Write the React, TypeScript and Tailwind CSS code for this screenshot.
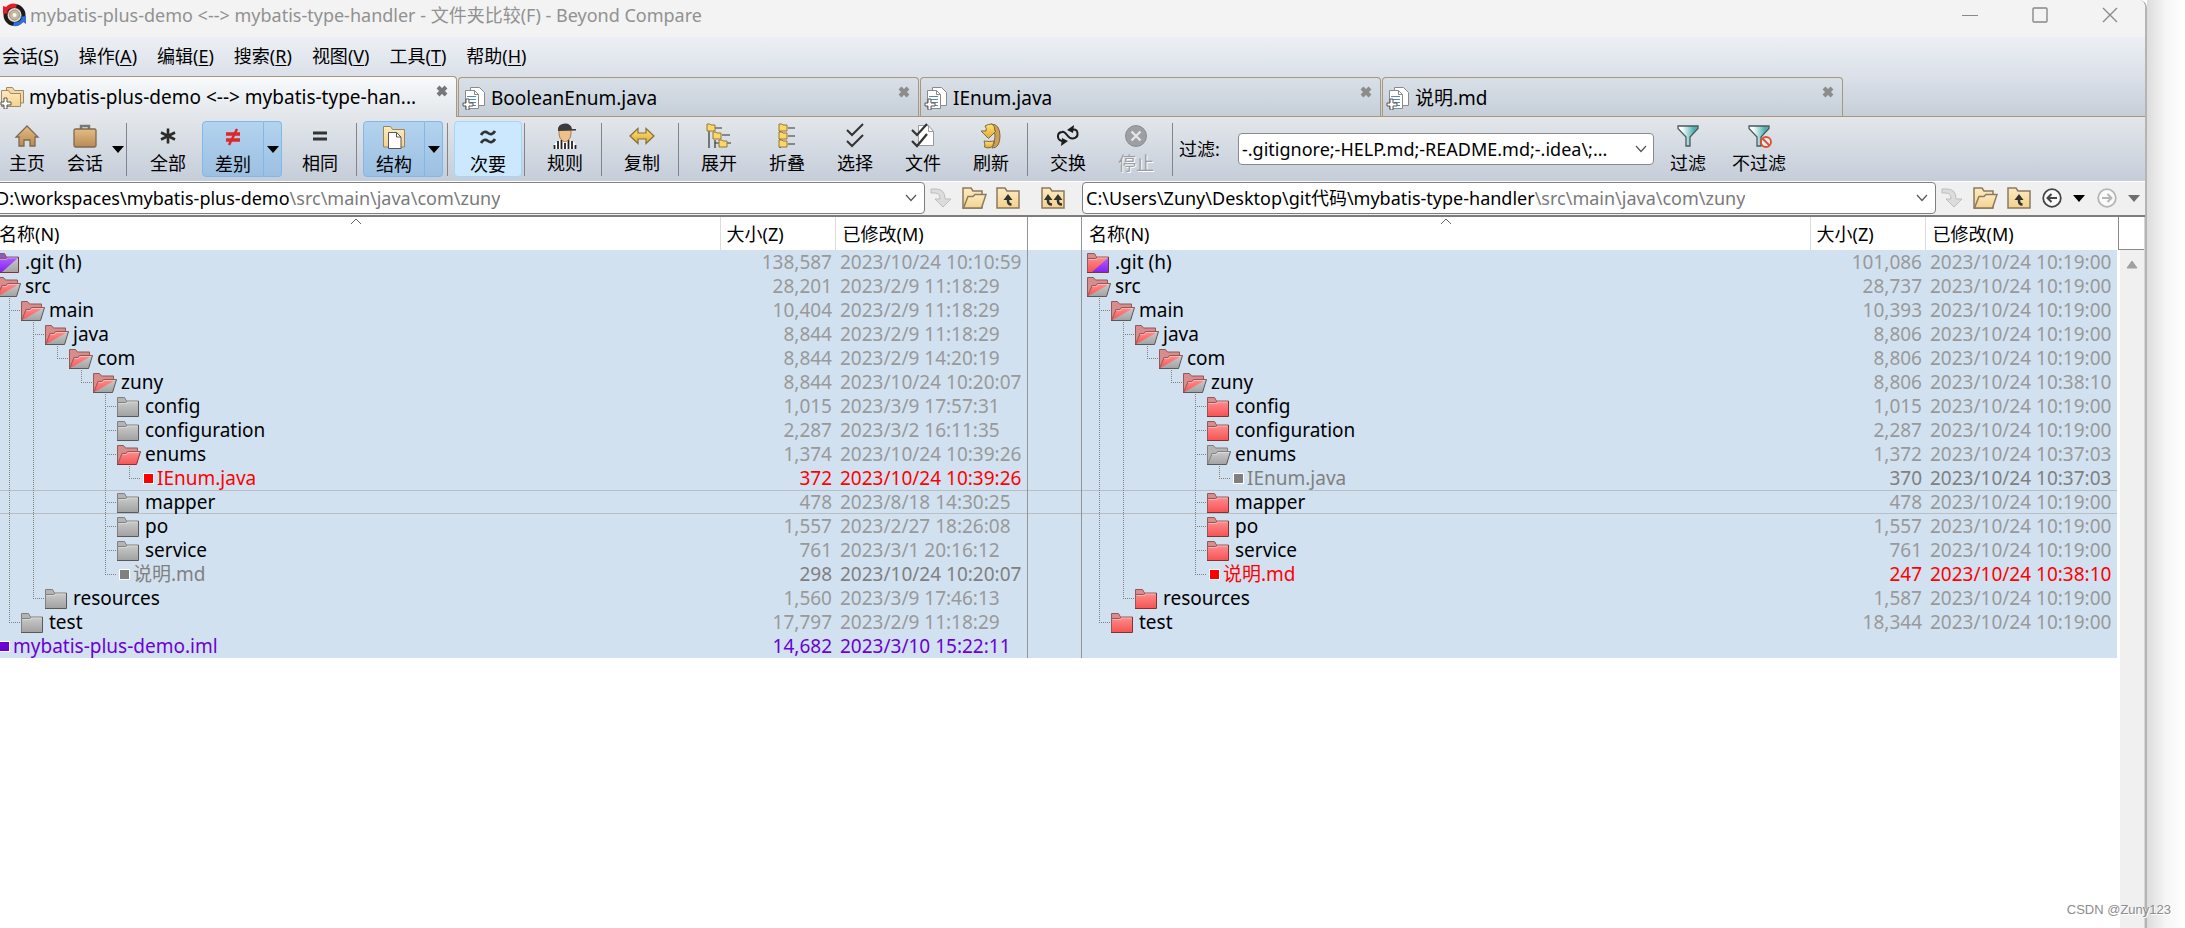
import { useState } from 'react';
import type { ReactNode } from 'react';

type Tone = 'red' | 'gray' | 'purple';
type Guide = 'pass' | 'tee' | 'corner' | 'none';

interface Entry {
  name: string;
  kind: 'closed' | 'open' | 'file';
  fill: [Tone, Tone];
  size: string;
  modified: string;
}

interface Row {
  guides: Guide[];
  left?: Entry;
  right?: Entry;
}

const folder = (name: string, kind: 'closed' | 'open', fill: [Tone, Tone], size: string, modified: string): Entry => ({
  name, kind, fill, size, modified,
});

const file = (name: string, tone: Tone, size: string, modified: string): Entry => ({
  name, kind: 'file', fill: [tone, tone], size, modified,
});

const GRAY: [Tone, Tone] = ['gray', 'gray'];
const RED: [Tone, Tone] = ['red', 'red'];
const MIXED: [Tone, Tone] = ['red', 'gray'];

const rows: Row[] = [
  {
    guides: [],
    left: folder('.git (h)', 'closed', ['purple', 'gray'], '138,587', '2023/10/24 10:10:59'),
    right: folder('.git (h)', 'closed', ['red', 'purple'], '101,086', '2023/10/24 10:19:00'),
  },
  {
    guides: [],
    left: folder('src', 'open', MIXED, '28,201', '2023/2/9 11:18:29'),
    right: folder('src', 'open', MIXED, '28,737', '2023/10/24 10:19:00'),
  },
  {
    guides: ['tee'],
    left: folder('main', 'open', MIXED, '10,404', '2023/2/9 11:18:29'),
    right: folder('main', 'open', MIXED, '10,393', '2023/10/24 10:19:00'),
  },
  {
    guides: ['pass', 'tee'],
    left: folder('java', 'open', MIXED, '8,844', '2023/2/9 11:18:29'),
    right: folder('java', 'open', MIXED, '8,806', '2023/10/24 10:19:00'),
  },
  {
    guides: ['pass', 'pass', 'corner'],
    left: folder('com', 'open', MIXED, '8,844', '2023/2/9 14:20:19'),
    right: folder('com', 'open', MIXED, '8,806', '2023/10/24 10:19:00'),
  },
  {
    guides: ['pass', 'pass', 'none', 'corner'],
    left: folder('zuny', 'open', MIXED, '8,844', '2023/10/24 10:20:07'),
    right: folder('zuny', 'open', MIXED, '8,806', '2023/10/24 10:38:10'),
  },
  {
    guides: ['pass', 'pass', 'none', 'none', 'tee'],
    left: folder('config', 'closed', GRAY, '1,015', '2023/3/9 17:57:31'),
    right: folder('config', 'closed', RED, '1,015', '2023/10/24 10:19:00'),
  },
  {
    guides: ['pass', 'pass', 'none', 'none', 'tee'],
    left: folder('configuration', 'closed', GRAY, '2,287', '2023/3/2 16:11:35'),
    right: folder('configuration', 'closed', RED, '2,287', '2023/10/24 10:19:00'),
  },
  {
    guides: ['pass', 'pass', 'none', 'none', 'tee'],
    left: folder('enums', 'open', RED, '1,374', '2023/10/24 10:39:26'),
    right: folder('enums', 'open', GRAY, '1,372', '2023/10/24 10:37:03'),
  },
  {
    guides: ['pass', 'pass', 'none', 'none', 'pass', 'corner'],
    left: file('IEnum.java', 'red', '372', '2023/10/24 10:39:26'),
    right: file('IEnum.java', 'gray', '370', '2023/10/24 10:37:03'),
  },
  {
    guides: ['pass', 'pass', 'none', 'none', 'tee'],
    left: folder('mapper', 'closed', GRAY, '478', '2023/8/18 14:30:25'),
    right: folder('mapper', 'closed', RED, '478', '2023/10/24 10:19:00'),
  },
  {
    guides: ['pass', 'pass', 'none', 'none', 'tee'],
    left: folder('po', 'closed', GRAY, '1,557', '2023/2/27 18:26:08'),
    right: folder('po', 'closed', RED, '1,557', '2023/10/24 10:19:00'),
  },
  {
    guides: ['pass', 'pass', 'none', 'none', 'tee'],
    left: folder('service', 'closed', GRAY, '761', '2023/3/1 20:16:12'),
    right: folder('service', 'closed', RED, '761', '2023/10/24 10:19:00'),
  },
  {
    guides: ['pass', 'pass', 'none', 'none', 'corner'],
    left: file('说明.md', 'gray', '298', '2023/10/24 10:20:07'),
    right: file('说明.md', 'red', '247', '2023/10/24 10:38:10'),
  },
  {
    guides: ['pass', 'corner'],
    left: folder('resources', 'closed', GRAY, '1,560', '2023/3/9 17:46:13'),
    right: folder('resources', 'closed', RED, '1,587', '2023/10/24 10:19:00'),
  },
  {
    guides: ['corner'],
    left: folder('test', 'closed', GRAY, '17,797', '2023/2/9 11:18:29'),
    right: folder('test', 'closed', RED, '18,344', '2023/10/24 10:19:00'),
  },
  {
    guides: [],
    left: file('mybatis-plus-demo.iml', 'purple', '14,682', '2023/3/10 15:22:11'),
  },
];

const menus = [
  ['会话', 'S'],
  ['操作', 'A'],
  ['编辑', 'E'],
  ['搜索', 'R'],
  ['视图', 'V'],
  ['工具', 'T'],
  ['帮助', 'H'],
];

const tabs = ['BooleanEnum.java', 'IEnum.java', '说明.md'];

const fileTone: Record<Tone, string> = {
  red: 'text-[#ff0000]',
  gray: 'text-[#808080]',
  purple: 'text-[#6a00d5]',
};

const bulletTone: Record<Tone, string> = {
  red: 'bg-[#ff0000]',
  gray: 'bg-[#808080]',
  purple: 'bg-[#6a00d5]',
};

const backFill: Record<Tone, string> = { red: '#d98c8c', gray: '#b4b4b4', purple: '#8a5cc0' };

/* Shared gradients */
function Defs() {
  const stops: [string, string, string][] = [
    ['red', '#ff8e8e', '#f65454'],
    ['gray', '#cbcbcb', '#a2a2a2'],
    ['purple', '#ae63ff', '#8420f0'],
    ['sand', '#fdeac0', '#f3d28c'],
    ['brown', '#e4bd80', '#b98a57'],
    ['gold', '#ffe27a', '#e0a92c'],
  ];
  return (
    <svg className="absolute size-0" aria-hidden="true">
      <defs>
        {stops.map(([id, from, to]) => (
          <linearGradient key={id} id={id} x1="0" y1="0" x2="0" y2="1">
            <stop offset="0" stopColor={from} />
            <stop offset="1" stopColor={to} />
          </linearGradient>
        ))}
        <linearGradient id="teal" x1="0" y1="0" x2="1" y2="0">
          <stop offset="0.2" stopColor="#ffffff" />
          <stop offset="0.8" stopColor="#4fb0ae" />
        </linearGradient>
      </defs>
    </svg>
  );
}

function Svg({ w, h, children }: { w: number; h: number; children: ReactNode }) {
  return (
    <svg width={w} height={h} viewBox={`0 0 ${w} ${h}`} fill="none" className="shrink-0" aria-hidden="true">
      {children}
    </svg>
  );
}

function TreeFolder({ kind, fill }: { kind: 'closed' | 'open'; fill: [Tone, Tone] }) {
  const [a, b] = fill;
  const edge = a === 'gray' ? '#808080' : '#8f5a5a';
  if (kind === 'closed') {
    return (
      <Svg w={24} h={20}>
        <path d="M0.5 5V0.5h7l2 3.5v2h-9z" fill={backFill[a]} stroke={edge} />
        <path d="M0.5 5.5h8l2-1.500h11v15h-21z" fill={`url(#${a})`} />
        {a !== b && <path d="M21.500 4.500v15h-17z" fill={`url(#${b})`} />}
        <path d="M0.5 19V5.500h8l2-1.500h11" stroke={edge} />
        <path d="M1.500 6.500h8l1.500-1.500h9.500" stroke="#fff" strokeOpacity="0.35" />
        <path d="M21.500 4v15.500H0" stroke={a === 'gray' ? '#5a5a5a' : '#7a3535'} />
      </Svg>
    );
  }
  return (
    <Svg w={24} h={20}>
      <path d="M0.500 19V0.500h6l2 2.500h12v14z" fill={backFill[a]} stroke={edge} />
      <path d="M0.500 19.500L5 8.500h4l1.500-2h13l-4 13z" fill={`url(#${a})`} />
      {a !== b && <path d="M23.500 6.500l-4 13h-19z" fill={`url(#${b})`} />}
      <path d="M0.500 19.500L5 8.500h4l1.500-2h13" stroke={edge} />
      <path d="M5.500 9.500h4l1.500-2h11" stroke="#fff" strokeOpacity="0.4" />
      <path d="M23.500 6.500l-4 13h-19.500" stroke={b === 'gray' ? '#5a5a5a' : '#8a3030'} />
    </Svg>
  );
}

function GuideCell({ type }: { type: Guide }) {
  return (
    <Svg w={24} h={24}>
      {type !== 'none' && (
        <path d={type === 'corner' ? 'M12.500 0v13' : 'M12.500 0v24'} stroke="#808080" strokeDasharray="1 1" />
      )}
      {(type === 'tee' || type === 'corner') && (
        <path d="M12 12.500h12" stroke="#808080" strokeDasharray="1 1" />
      )}
    </Svg>
  );
}

function SandFolder({ children }: { children?: ReactNode }) {
  return (
    <Svg w={24} h={22}>
      <path d="M1 21V1h8l2 3h12v17z" fill="url(#sand)" stroke="#8a7a60" strokeWidth="1.500" />
      {children}
    </Svg>
  );
}

function UpFolderIcon() {
  return (
    <SandFolder>
      <path d="M12 9v5q0 3.500 3.500 3.500" stroke="#333" strokeWidth="2.500" />
      <path d="M7.500 13l4.500-6 4.500 6z" fill="#333" />
    </SandFolder>
  );
}

function UpUpFolderIcon() {
  return (
    <SandFolder>
      <path d="M7 10v4q0 3.500 4 3.500M17 10v4q0 3.500 4 3.500" stroke="#333" strokeWidth="2.500" />
      <path d="M3 13l4-6 4.500 6zM12.500 13l4.500-6 4.500 6z" fill="#333" />
    </SandFolder>
  );
}

function OpenFolderIcon() {
  return (
    <Svg w={25} h={22}>
      <path d="M1 21V1h8l2 3h9v17z" fill="url(#sand)" stroke="#8a7a60" strokeWidth="1.500" />
      <path d="M1.500 21L6 9.500h5l2-2h11L19.500 21z" fill="url(#sand)" stroke="#8a7a60" strokeWidth="1.500" />
    </Svg>
  );
}

function CopyArrowIcon() {
  return (
    <Svg w={24} h={20}>
      <path d="M1 1h5q9 0 9 10h6l-8 8-8-8h5q0-6-5-6H1z" fill="#dcdcdc" stroke="#bdbdbd" />
    </Svg>
  );
}

function Chevron() {
  return (
    <Svg w={12} h={8}>
      <path d="M1 1l5 5.500L11 1" stroke="#555" strokeWidth="1.200" />
    </Svg>
  );
}

function DownTriangle({ color = '#000' }: { color?: string }) {
  return (
    <Svg w={12} h={7}>
      <path d="M0 0h12L6 7z" fill={color} />
    </Svg>
  );
}

function CloseMark({ color = '#8c8c8c' }: { color?: string }) {
  return (
    <Svg w={12} h={12}>
      <path d="M2 2l8 8M10 2l-8 8" stroke={color} strokeWidth="4" />
    </Svg>
  );
}

function AppLogo() {
  return (
    <Svg w={24} h={24}>
      <circle cx="12.500" cy="12" r="9" fill="#e4dccd" stroke="#1c1c1c" strokeWidth="4" />
      <circle cx="12.500" cy="12" r="5" fill="#c3b9a6" stroke="#9c9484" />
      <circle cx="12.500" cy="12" r="2" fill="#faf6ee" />
      <path d="M5 9Q7 4 14 5l1-4Q8-1 4 4L1 3v8l7-1z" fill="#e0202a" />
      <path d="M20 15q-2 5-8 4l-1 4q6 1 10-4l3 2v-8l-7 1z" fill="#2f6fe0" />
    </Svg>
  );
}

function FolderTabIcon() {
  return (
    <Svg w={25} h={24}>
      <path d="M6.500 18V2.500h6l2 3h9V18z" fill="#f3d9a8" stroke="#a08a62" />
      <path d="M1.500 21.500V5.500h7l2 3h10v13z" fill="url(#sand)" stroke="#a08a62" />
      <path d="M4 13h3v4h4v3H7v4H4v-4H1v-3h3z" fill="#fff" stroke="#555" />
    </Svg>
  );
}

function FileTabIcon() {
  return (
    <Svg w={25} h={24}>
      <path d="M8.500 1.500h9l5 5v13h-14z" fill="#fff" stroke="#8a8a8a" />
      <path d="M3.500 4.500h9l4 4v14h-13z" fill="#fff" stroke="#8a8a8a" />
      <path d="M12.500 4.500v4h4" stroke="#8a8a8a" />
      <path d="M5 10.500h9M5 13.500h9M8 16.500h6M9 19.500h5" stroke="#5b86b8" strokeWidth="1.200" />
      <path d="M4 13h3v4h4v3H7v4H4v-4H1v-3h3z" fill="#fff" stroke="#555" />
    </Svg>
  );
}

function HomeIcon() {
  return (
    <Svg w={26} h={24}>
      <path d="M13 2L2 13h3v9h5v-6h6v6h5v-9h3z" fill="url(#brown)" stroke="#7d6a50" strokeWidth="1.300" />
    </Svg>
  );
}

function BriefcaseIcon() {
  return (
    <Svg w={26} h={24}>
      <path d="M9 6V2h8v4" stroke="#777" strokeWidth="2.500" />
      <rect x="2" y="5" width="22" height="18" rx="1.500" fill="url(#brown)" stroke="#7d6a50" strokeWidth="1.300" />
    </Svg>
  );
}

function AsteriskIcon() {
  return (
    <Svg w={18} h={18}>
      <path d="M9 1.500v15M2 5.500l14 7M16 5.500l-14 7" stroke="#2b2b2b" strokeWidth="2.600" />
    </Svg>
  );
}

function NotEqualIcon() {
  return (
    <Svg w={18} h={18}>
      <path d="M2 6h14M2 12h14" stroke="#e02626" strokeWidth="3.500" />
      <path d="M13 1L5 17" stroke="#e02626" strokeWidth="2.500" />
    </Svg>
  );
}

function EqualIcon() {
  return (
    <Svg w={18} h={18}>
      <path d="M2 6h14M2 12h14" stroke="#333" strokeWidth="3" />
    </Svg>
  );
}

function ApproxIcon() {
  return (
    <Svg w={18} h={18}>
      <path d="M2 7q3-5 7-2t7-2M2 15q3-5 7-2t7-2" stroke="#333" strokeWidth="2.800" />
    </Svg>
  );
}

function StructureIcon() {
  return (
    <Svg w={24} h={24}>
      <path d="M1.500 22V1.500h7l2 3h12V22z" fill="url(#sand)" stroke="#9a865c" />
      <path d="M6.500 7.500h8l4.500 4.500v11.500H6.500z" fill="#fff" stroke="#555" />
      <path d="M14.500 7.500V12H19" stroke="#555" />
    </Svg>
  );
}

function RefereeIcon() {
  return (
    <Svg w={26} h={26}>
      <path d="M1 26q1-8 8-9h8q7 1 8 9z" fill="#fff" />
      <path d="M2.500 26v-4M6 26v-8M9.500 26v-9M13 26v-6M16.500 26v-9M20 26v-8M23.500 26v-4" stroke="#222" strokeWidth="1.800" />
      <path d="M7 6h12v5q0 5-4 7l-2 1-2-1q-4-2-4-7z" fill="#efc08a" stroke="#a06a3a" strokeWidth="0.800" />
      <path d="M6 8q-1-7 7-7.500Q19 0.500 20 6h4v1.500z" fill="#3c3c3c" />
    </Svg>
  );
}

function CopyBothIcon() {
  return (
    <Svg w={26} h={18}>
      <path d="M1 9l8-7.500V6h8V1.500L25 9l-8 7.500V12H9v4.500z" fill="url(#gold)" stroke="#85703a" strokeWidth="1.200" />
    </Svg>
  );
}

function MiniFolder({ x, y }: { x: number; y: number }) {
  return <path d={`M${x} ${y}h3l1 1h4v6h-8z`} fill="#fbd768" stroke="#94793a" />;
}

function ExpandIcon() {
  return (
    <Svg w={26} h={26}>
      <path d="M3 8v17M9 17v8M9 5h7M16 12h8M21 20h4M9 20h4" stroke="#333" strokeWidth="1.200" />
      <MiniFolder x={1} y={1} />
      <MiniFolder x={7} y={9} />
      <MiniFolder x={13} y={17} />
    </Svg>
  );
}

function CollapseIcon() {
  return (
    <Svg w={20} h={26}>
      <path d="M3 1v24M11 5h7M11 13h7M11 21h7" stroke="#333" strokeWidth="1.200" />
      <MiniFolder x={2} y={1} />
      <MiniFolder x={2} y={9} />
      <MiniFolder x={2} y={17} />
    </Svg>
  );
}

function SelectIcon() {
  return (
    <Svg w={20} h={26}>
      <path d="M2 7l5 5L18 1M2 18l5 5L18 12" stroke="#333" strokeWidth="2" />
    </Svg>
  );
}

function FilesIcon() {
  return (
    <Svg w={26} h={26}>
      <path d="M8.500 2.500h10l5 6v14h-15z" fill="#fff" stroke="#9a9a9a" />
      <path d="M18.500 2.500v6h5" stroke="#9a9a9a" />
      <path d="M2 7l5 5L17 1M2 18l5 5L17 11" stroke="#333" strokeWidth="2.200" />
    </Svg>
  );
}

function RefreshIcon() {
  return (
    <Svg w={22} h={26}>
      <path d="M11 1q9 0 9 12t-8 12q3-4 3-12T11 1z" fill="#cfa050" stroke="#7d6a44" />
      <path d="M5 3q3-2 7-2 3 2 3 7h1l-7.500 7.500L1 8h5q1-3-1-5z" fill="url(#gold)" stroke="#7d6a44" />
      <path d="M4 18q5 1 10 0-0.500 5-3 6.500-4 1-6.500-0.500 1-3-0.500-6z" fill="url(#gold)" stroke="#7d6a44" />
    </Svg>
  );
}

function SwapIcon() {
  return (
    <Svg w={24} h={22}>
      <path d="M14 5q7-2 7.500 3t-4.500 5.500Q14 14 11 10T6 7Q1.500 7.500 2 12t7 4" stroke="#1c1c1c" strokeWidth="2" />
      <path d="M11 5l7-5-1 8zM12 16l-7 5 1-8z" fill="#1c1c1c" />
    </Svg>
  );
}

function StopIcon() {
  return (
    <Svg w={24} h={24}>
      <circle cx="12" cy="12" r="10.500" fill="#9c9fa3" stroke="#8b8d91" />
      <path d="M7.500 7.500l9 9M16.500 7.500l-9 9" stroke="#e6e6e6" strokeWidth="2.400" />
    </Svg>
  );
}

function FunnelIcon({ off = false }: { off?: boolean }) {
  return (
    <Svg w={26} h={24}>
      <path d="M3 2h20v2.500l-8 8.500v9h-4v-9L3 4.500z" fill="url(#teal)" stroke="#4a5a5e" strokeWidth="1.300" />
      {off && (
        <>
          <circle cx="20" cy="18" r="5" fill="#e6ebf0" stroke="#d9502f" strokeWidth="1.800" />
          <path d="M16.500 14.500l7 7" stroke="#d9502f" strokeWidth="1.800" />
        </>
      )}
    </Svg>
  );
}

function RoundArrow({ color, flip = false }: { color: string; flip?: boolean }) {
  return (
    <Svg w={20} h={20}>
      <circle cx="10" cy="10" r="8.800" fill="#fafafa" stroke={color} strokeWidth="1.800" />
      <path
        d={flip ? 'M5 10h9M10.500 6l4 4-4 4' : 'M15 10H6M9.500 6l-4 4 4 4'}
        stroke={color}
        strokeWidth="2"
      />
    </Svg>
  );
}

function Separator() {
  return <div className="ml-0.5 mr-1.5 h-[53px] w-px shrink-0 bg-[#7f858e]" />;
}

interface ToolProps {
  label: string;
  icon: ReactNode;
  width?: string;
  className?: string;
  disabled?: boolean;
}

function Tool({ label, icon, width = 'w-[68px]', className = '', disabled = false }: ToolProps) {
  return (
    <button
      type="button"
      disabled={disabled}
      className={`flex h-14 shrink-0 flex-col items-center ${width} ${className}`}
    >
      <span className="flex h-[30px] items-center">{icon}</span>
      <span
        className={`text-[18px] leading-6 ${disabled ? 'text-[#9b9fa5] [text-shadow:1px_1px_0_#fff]' : ''}`}
      >
        {label}
      </span>
    </button>
  );
}

function DropArrow({ label, className = '' }: { label: string; className?: string }) {
  return (
    <button type="button" aria-label={label} className={`flex h-14 shrink-0 items-center justify-center ${className}`}>
      <DownTriangle />
    </button>
  );
}

function IconButton({ label, children }: { label: string; children: ReactNode }) {
  return (
    <button type="button" aria-label={label} className="flex w-[33px] shrink-0 items-center justify-center">
      {children}
    </button>
  );
}

function PathBox({ base, rest }: { base: string; rest: string }) {
  return (
    <button
      type="button"
      role="combobox"
      aria-expanded={false}
      aria-label="路径"
      className="flex h-8 min-w-0 flex-1 items-center justify-between rounded-sm border border-[#7f7f7f] bg-white pl-[3px] pr-[7px] text-[18px] leading-6"
    >
      <span className="truncate">
        {base}
        <span className="text-[#7a7a7a]">{rest}</span>
      </span>
      <Chevron />
    </button>
  );
}

interface FileTableProps {
  side: 'left' | 'right';
  focused: number;
  onFocusRow: (index: number) => void;
}

function FileTable({ side, focused, onFocusRow }: FileTableProps) {
  return (
    <table className="w-full table-fixed border-collapse">
      <colgroup>
        <col />
        <col className="w-[115px]" />
        <col className="w-[192px]" />
      </colgroup>
      <thead>
        <tr className="h-[33px] text-left text-[18px]">
          <th className="relative bg-white p-0 pl-[7px] font-normal leading-6">
            名称(N)
            <span className="absolute left-1/2 top-px -translate-x-1/2">
              <Svg w={12} h={7}>
                <path d="M1 6l5-5 5 5" stroke="#666" />
              </Svg>
            </span>
          </th>
          <th className="border-l border-[#dcdcdc] bg-white p-0 pl-1.5 font-normal leading-6">大小(Z)</th>
          <th className="border-l border-[#dcdcdc] bg-white p-0 pl-[7px] font-normal leading-6">已修改(M)</th>
        </tr>
      </thead>
      <tbody>
        {rows.map((row, index) => {
          const entry = row[side];
          const isFile = entry?.kind === 'file';
          const tone = entry && isFile ? fileTone[entry.fill[0]] : '';
          const line = index === focused ? 'shadow-[inset_0_1px_0_#b9bec4,inset_0_-1px_0_#b9bec4]' : '';
          return (
            <tr key={index} onClick={() => onFocusRow(index)} className={`h-6 bg-[#d2e1f0] leading-6 ${line}`}>
              <td className={`p-0 ${tone}`}>
                {entry && (
                  <div className="flex h-6 items-center pl-[5px]">
                    {row.guides.map((type, i) => (
                      <GuideCell key={i} type={type} />
                    ))}
                    {entry.kind === 'file' ? (
                      <span className={`ml-0.5 mr-[3px] size-[11px] border border-white ${bulletTone[entry.fill[0]]}`} />
                    ) : (
                      <span className="mr-1 pt-0.5">
                        <TreeFolder kind={entry.kind} fill={entry.fill} />
                      </span>
                    )}
                    <span className="whitespace-nowrap">{entry.name}</span>
                  </div>
                )}
              </td>
              <td className={`p-0 pr-[3px] text-right ${isFile ? tone : 'text-[#999999]'}`}>{entry?.size}</td>
              <td className={`whitespace-nowrap p-0 pl-[5px] ${isFile ? tone : 'text-[#999999]'}`}>{entry?.modified}</td>
            </tr>
          );
        })}
      </tbody>
    </table>
  );
}

export default function App() {
  const [focused, setFocused] = useState(10);

  return (
    <div className="relative flex min-h-screen bg-white font-['Noto_Sans','Noto_Sans_CJK_SC',sans-serif] text-[19px] text-black">
      <Defs />
      <div className="flex min-w-0 flex-1 flex-col overflow-hidden rounded-tr-lg border-r-2 border-[#b4b4b4] bg-white">
        {/* Title bar */}
        <header className="flex h-[37px] items-start justify-between bg-[#f3f3f3]">
          <div className="flex h-[30px] items-center gap-1 pl-0.5">
            <AppLogo />
            <h1 className="text-[18px] leading-6 text-[#919191]">
              mybatis-plus-demo &lt;--&gt; mybatis-type-handler - 文件夹比较(F) - Beyond Compare
            </h1>
          </div>
          <div className="flex h-[30px]">
            <button type="button" aria-label="最小化" className="flex w-[70px] items-center justify-center">
              <Svg w={16} h={16}>
                <path d="M0 8.500h16" stroke="#888" />
              </Svg>
            </button>
            <button type="button" aria-label="最大化" className="flex w-[70px] items-center justify-center">
              <Svg w={16} h={16}>
                <rect x="1" y="1" width="14" height="14" rx="1" stroke="#888" strokeWidth="1.400" />
              </Svg>
            </button>
            <button type="button" aria-label="关闭" className="flex w-[70px] items-center justify-center">
              <Svg w={16} h={16}>
                <path d="M1 1l14 14M15 1L1 15" stroke="#888" strokeWidth="1.300" />
              </Svg>
            </button>
          </div>
        </header>

        {/* Menu and tabs */}
        <div className="bg-linear-to-b from-[#ecf0f4] via-[#dbe0e9] to-[#c5ced7]">
          <nav className="flex h-[39px] items-center gap-5 pb-0.5 pl-0.5 text-[18px]">
            {menus.map(([name, key]) => (
              <button key={key} type="button" className="leading-6">
                {name}(<span className="underline underline-offset-2">{key}</span>)
              </button>
            ))}
          </nav>
          <div role="tablist" className="flex h-[41px] items-end">
            <div className="flex h-full w-[457px] items-start rounded-tr border-r border-t border-[#a8977a] bg-linear-to-b from-[#f8fafc] to-[#e2e6ea]">
              <button type="button" role="tab" aria-selected className="flex h-10 flex-1 items-center gap-1 leading-6">
                <FolderTabIcon />
                mybatis-plus-demo &lt;--&gt; mybatis-type-han...
              </button>
              <button type="button" aria-label="关闭标签" className="mr-2 mt-2">
                <CloseMark color="#777" />
              </button>
            </div>
            <div className="flex h-full flex-1 items-end border-b border-[#a8977a] pl-px">
              {tabs.map((tab) => (
                <div
                  key={tab}
                  className="mr-px flex h-[39px] w-[461px] items-start rounded-t border-x border-t border-[#a8977a] bg-linear-to-b from-[#d9e0e8] to-[#c6ced8]"
                >
                  <button type="button" role="tab" aria-selected={false} className="flex h-[39px] flex-1 items-center gap-1 pl-[3px] leading-6">
                    <FileTabIcon />
                    {tab}
                  </button>
                  <button type="button" aria-label="关闭标签" className="mr-2 mt-2">
                    <CloseMark />
                  </button>
                </div>
              ))}
            </div>
          </div>
        </div>

        {/* Toolbar */}
        <div className="flex h-[65px] items-center border-b border-white bg-linear-to-b from-[#e3e7eb] to-[#c5cdd9]">
          <Tool label="主页" icon={<HomeIcon />} width="w-[54px]" />
          <Tool label="会话" icon={<BriefcaseIcon />} width="w-[62px]" />
          <DropArrow label="会话列表" className="-ml-1 w-3" />
          <Separator />
          <Tool label="全部" icon={<AsteriskIcon />} className="ml-px" />
          <Tool
            label="差别"
            icon={<NotEqualIcon />}
            width="w-[62px]"
            className="rounded-l-sm border border-[#7fb9ec] bg-linear-to-b from-[#b3d3ee] to-[#9dc0e2]"
          />
          <DropArrow
            label="差别选项"
            className="w-[18px] rounded-r-sm border border-l-0 border-[#7fb9ec] bg-linear-to-b from-[#b3d3ee] to-[#9dc0e2]"
          />
          <Tool label="相同" icon={<EqualIcon />} className="ml-1" />
          <Separator />
          <Tool
            label="结构"
            icon={<StructureIcon />}
            width="w-[62px]"
            className="rounded-l-sm border border-[#7fb9ec] bg-linear-to-b from-[#b3d3ee] to-[#9dc0e2]"
          />
          <DropArrow
            label="结构选项"
            className="mr-0.5 w-[18px] rounded-r-sm border border-l-0 border-[#7fb9ec] bg-linear-to-b from-[#b3d3ee] to-[#9dc0e2]"
          />
          <Separator />
          <Tool label="次要" icon={<ApproxIcon />} className="rounded border border-[#a5d6f9] bg-[#cce8ff]" />
          <Separator />
          <Tool label="规则" icon={<RefereeIcon />} />
          <Separator />
          <Tool label="复制" icon={<CopyBothIcon />} />
          <Separator />
          <Tool label="展开" icon={<ExpandIcon />} />
          <Tool label="折叠" icon={<CollapseIcon />} />
          <Tool label="选择" icon={<SelectIcon />} />
          <Tool label="文件" icon={<FilesIcon />} />
          <Tool label="刷新" icon={<RefreshIcon />} />
          <Separator />
          <Tool label="交换" icon={<SwapIcon />} />
          <Tool label="停止" icon={<StopIcon />} disabled />
          <Separator />
          <label htmlFor="filter" className="w-[59px] shrink-0 text-[18px] leading-6">
            过滤:
          </label>
          <div className="relative w-[416px] shrink-0">
            <select
              id="filter"
              className="h-8 w-full appearance-none rounded-sm border border-[#8a8a8a] bg-white pl-[3px] pr-6 text-[18px] leading-6"
            >
              <option>-.gitignore;-HELP.md;-README.md;-.idea\;...</option>
            </select>
            <span className="pointer-events-none absolute right-[7px] top-3">
              <Chevron />
            </span>
          </div>
          <Tool label="过滤" icon={<FunnelIcon />} />
          <Tool label="不过滤" icon={<FunnelIcon off />} width="w-[74px]" />
        </div>

        {/* Comparison panes */}
        <main className="flex flex-1 items-stretch">
          <section className="-ml-2 flex min-w-0 flex-[1_1_0px] flex-col">
            <div className="flex h-[35px] items-start border-b-2 border-[#7c7c7c] bg-[#f0f0f0]">
              <PathBox base={'D:\\workspaces\\mybatis-plus-demo'} rest={'\\src\\main\\java\\com\\zuny'} />
              <div className="flex h-8 items-center pr-[3px]">
                <IconButton label="复制路径"><CopyArrowIcon /></IconButton>
                <IconButton label="浏览"><OpenFolderIcon /></IconButton>
                <IconButton label="上级目录"><UpFolderIcon /></IconButton>
              </div>
            </div>
            <FileTable side="left" focused={focused} onFocusRow={setFocused} />
          </section>

          <div className="flex w-[55px] shrink-0 flex-col">
            <div className="flex h-[35px] items-start justify-center border-b-2 border-[#7c7c7c] bg-[#f0f0f0]">
              <div className="flex h-8 items-center pr-1">
                <IconButton label="两侧上级目录"><UpUpFolderIcon /></IconButton>
              </div>
            </div>
            <div className="border-x border-[#8f959b]">
              <div className="h-[33px]" />
              {rows.map((_, index) => (
                <div
                  key={index}
                  className={`h-6 bg-[#d2e1f0] ${index === focused ? 'shadow-[inset_0_1px_0_#b9bec4,inset_0_-1px_0_#b9bec4]' : ''}`}
                />
              ))}
            </div>
          </div>

          <section className="flex min-w-0 flex-[1_1_28px] flex-col">
            <div className="flex h-[35px] items-start border-b-2 border-[#7c7c7c] bg-[#f0f0f0]">
              <PathBox base={'C:\\Users\\Zuny\\Desktop\\git代码\\mybatis-type-handler'} rest={'\\src\\main\\java\\com\\zuny'} />
              <div className="flex h-8 items-center">
                <IconButton label="复制路径"><CopyArrowIcon /></IconButton>
                <IconButton label="浏览"><OpenFolderIcon /></IconButton>
                <IconButton label="上级目录"><UpFolderIcon /></IconButton>
                <IconButton label="后退"><RoundArrow color="#454545" /></IconButton>
                <button type="button" aria-label="后退历史" className="flex w-[22px] justify-center"><DownTriangle /></button>
                <IconButton label="前进"><RoundArrow color="#b5b5b5" flip /></IconButton>
                <button type="button" aria-label="前进历史" className="flex w-[22px] justify-center"><DownTriangle color="#6e6e6e" /></button>
              </div>
            </div>
            <div className="flex flex-1">
              <div className="min-w-0 flex-1">
                <FileTable side="right" focused={focused} onFocusRow={setFocused} />
              </div>
              <div className="ml-px flex w-[27px] shrink-0 flex-col border-r border-[#d5d5d5]">
                <div className="h-[33px] border-b border-l border-[#8a8a8a]" />
                <div className="ml-0.5 flex flex-1 flex-col items-center bg-[#f0f0f0] pt-2.5">
                  <Svg w={12} h={9}>
                    <path d="M6 1l5 7H1z" fill="#a0a0a0" stroke="#a0a0a0" strokeLinejoin="round" />
                  </Svg>
                </div>
              </div>
            </div>
          </section>
        </main>
      </div>

      {/* Window shadow */}
      <div className="w-[38px] shrink-0 bg-linear-to-r from-[#dcdcdc] via-[#f6f6f6] to-white" />

      <p className="absolute bottom-2 right-3.5 font-['Liberation_Sans',sans-serif] text-[13px] leading-5 text-[#8c8c8c] [text-shadow:1px_1px_0_#fff]">
        CSDN @Zuny123
      </p>
    </div>
  );
}
